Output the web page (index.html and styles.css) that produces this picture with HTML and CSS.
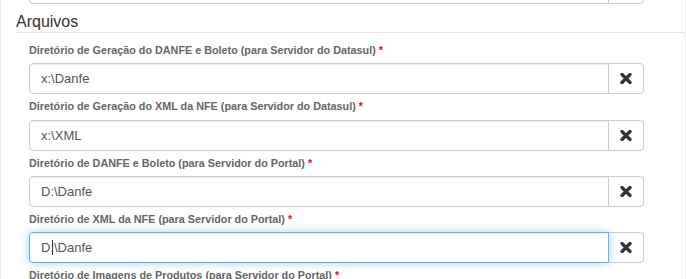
FILE: index.html
```html
<!DOCTYPE html>
<html lang="pt-BR">
<head>
<meta charset="utf-8">
<title>Arquivos</title>
<link rel="stylesheet" href="styles.css">
</head>
<body>
<div class="panel">
  <div class="fields prev">
    <div class="form-group">
      <div class="input-group">
        <input class="form-control" type="text" value="">
        <span class="btn"><svg class="ico" viewBox="0 0 12 11" width="12" height="11"><path d="M2 1.5 L10 9.5 M10 1.5 L2 9.5" /></svg></span>
      </div>
    </div>
  </div>

  <h3 class="section-title">Arquivos</h3>

  <div class="fields">
    <div class="form-group">
      <label>Diretório de Geração do DANFE e Boleto (para Servidor do Datasul) <span class="req">*</span></label>
      <div class="input-group">
        <input class="form-control" type="text" value="x:\Danfe">
        <span class="btn"><svg class="ico" viewBox="0 0 12 11" width="12" height="11"><path d="M2 1.5 L10 9.5 M10 1.5 L2 9.5" /></svg></span>
      </div>
    </div>
    <div class="form-group">
      <label>Diretório de Geração do XML da NFE (para Servidor do Datasul) <span class="req">*</span></label>
      <div class="input-group">
        <input class="form-control" type="text" value="x:\XML">
        <span class="btn"><svg class="ico" viewBox="0 0 12 11" width="12" height="11"><path d="M2 1.5 L10 9.5 M10 1.5 L2 9.5" /></svg></span>
      </div>
    </div>
    <div class="form-group">
      <label>Diretório de DANFE e Boleto (para Servidor do Portal) <span class="req">*</span></label>
      <div class="input-group">
        <input class="form-control" type="text" value="D:\Danfe">
        <span class="btn"><svg class="ico" viewBox="0 0 12 11" width="12" height="11"><path d="M2 1.5 L10 9.5 M10 1.5 L2 9.5" /></svg></span>
      </div>
    </div>
    <div class="form-group">
      <label>Diretório de XML da NFE (para Servidor do Portal) <span class="req">*</span></label>
      <div class="input-group">
        <div class="form-control focus">D:<span class="caret"></span>\Danfe</div>
        <span class="btn"><svg class="ico" viewBox="0 0 12 11" width="12" height="11"><path d="M2 1.5 L10 9.5 M10 1.5 L2 9.5" /></svg></span>
      </div>
    </div>
    <div class="form-group">
      <label>Diretório de Imagens de Produtos (para Servidor do Portal) <span class="req">*</span></label>
      <div class="input-group">
        <input class="form-control" type="text" value="">
        <span class="btn"><svg class="ico" viewBox="0 0 12 11" width="12" height="11"><path d="M2 1.5 L10 9.5 M10 1.5 L2 9.5" /></svg></span>
      </div>
    </div>
  </div>
</div>
</body>
</html>
```

FILE: styles.css
```css
html, body {
  margin: 0;
  padding: 0;
  background: #fff;
}
body {
  font-family: "Liberation Sans", Arial, Helvetica, sans-serif;
  color: #333;
  height: 279px;
  overflow: hidden;
}
.panel {
  border-left: 1px solid #eeeeee;
  border-right: 1px solid #eeeeee;
  padding: 1px 0 0 15px;
  min-height: 420px;
}
.fields {
  margin: 0 41px 0 13px;
}
.fields.prev {
  margin-top: -28px;
}
.prev .form-group {
  margin-bottom: 0;
}
.section-title {
  margin: 8px 0 10px;
  font-size: 16px;
  line-height: 20px;
  font-weight: normal;
  color: #333;
  border-bottom: 1px solid #e5e5e5;
}
.form-group {
  margin-bottom: 5px;
}
.form-group label {
  display: block;
  font-size: 10.8px;
  font-weight: bold;
  line-height: 15.33px;
  margin-bottom: 5px;
  color: #666;
}
.req {
  color: #f00;
}
.input-group {
  display: flex;
}
.form-control {
  flex: 1;
  min-width: 0;
  height: 31px;
  box-sizing: border-box;
  margin: 0;
  border: 1px solid #ccc;
  border-radius: 4px 0 0 4px;
  padding: 0 11px;
  font-family: "Liberation Sans", Arial, sans-serif;
  font-size: 13px;
  color: #555;
  background: #fff;
  box-shadow: inset 0 1px 1px rgba(0, 0, 0, 0.075);
  outline: none;
  position: relative;
  z-index: 2;
}
.form-control.focus {
  display: flex;
  align-items: center;
  border-color: #66afe9;
  box-shadow: inset 0 1px 1px rgba(0, 0, 0, 0.075), 0 0 8px rgba(102, 175, 233, 0.6);
  z-index: 3;
}
.caret {
  display: inline-block;
  width: 1px;
  height: 15px;
  margin-left: -2px;
  margin-right: 1px;
  background: #333;
}
.btn {
  flex: none;
  width: 36px;
  height: 31px;
  box-sizing: border-box;
  margin-left: -1px;
  border: 1px solid #ccc;
  border-radius: 0 4px 4px 0;
  background: #fff;
  display: flex;
  align-items: center;
  justify-content: center;
}
.ico path {
  stroke: #333;
  stroke-width: 3.3;
  stroke-linecap: round;
  fill: none;
}
```
